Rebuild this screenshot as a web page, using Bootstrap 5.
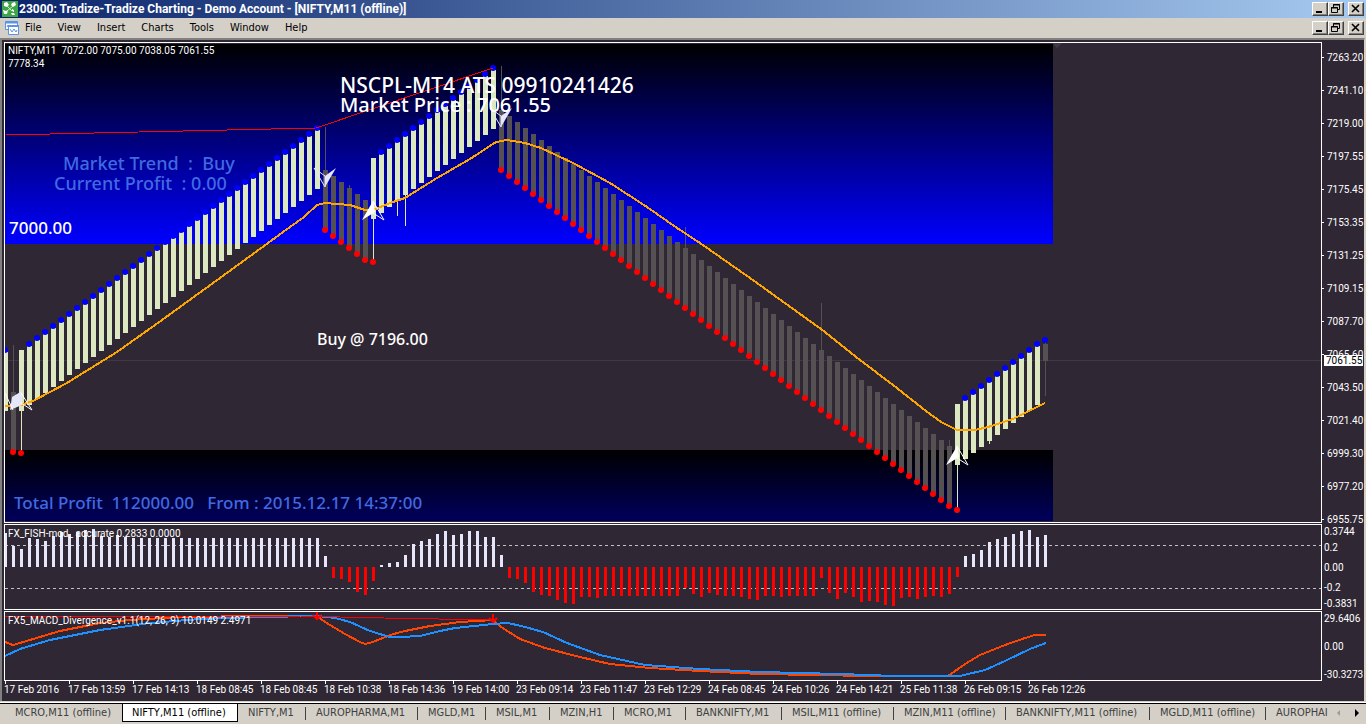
<!DOCTYPE html>
<html lang="en">
<head>
<meta charset="utf-8">
<meta name="viewport" content="width=device-width, initial-scale=1">
<title>Tradize Charting</title>
<link href="https://cdn.jsdelivr.net/npm/bootstrap@5.3.0/dist/css/bootstrap.min.css" rel="stylesheet">
<style>
:root{--face:#d4d0c8;--ink:#2f2733;--ui:"DejaVu Sans Condensed","Open Sans",sans-serif;--chart:Roboto,sans-serif;--hand:"Comic Sans MS","Noto Sans",sans-serif}
body{font:11px/14px Tahoma,var(--ui);background:var(--face);color:#000;overflow:hidden}
.titlebar{height:18px;background:linear-gradient(90deg,#0a246a,#a6caf0);color:#fff;padding-right:2px}
.titlebar h1{font:bold 12px/18px Tahoma,Roboto,sans-serif;white-space:nowrap}
.menubar{height:20px;padding-right:2px}
.menubar .nav-link{color:#000;font-size:11px;line-height:20px;padding:0;white-space:nowrap}
.menus{gap:16px}
.winbtn{width:16px;height:14px;padding:0;border:1px solid;border-color:#fff #404040 #404040 #fff;background:var(--face);box-shadow:inset -1px -1px #808080;display:flex;align-items:center;justify-content:center}
.winbtn svg{display:block}
.client{flex:1 1 0;background:var(--ink);border-left:2px solid #808080;border-top:2px solid #808080;border-right:1px solid var(--face);padding:2px 0 0 2px;color:#fff;margin-right:1px;min-height:0}
.plotrow{display:grid;grid-template-columns:minmax(0,1fr) 42px;grid-template-rows:minmax(0,1fr)}
.mainrow{flex:1 1 0;min-height:0}
.fishrow{height:86px;margin-top:1px;flex:none}
.macdrow{height:70px;margin-top:1px;flex:none}
.plot{border:1px solid #fff;position:relative;overflow:hidden}
.plot svg{display:block;width:100%;height:100%}
.scale{font:10px/33px Tahoma,var(--chart);position:relative}
.scale div{height:33px;display:flex;align-items:center}
.scale .pricetick::before{content:"";width:2px;height:1px;background:#fff;margin-right:3px}
.mainrow .scale{margin-top:-1px}
.scale .lastprice{position:absolute;left:2px;right:1px;top:314px;height:11px;background:#fff;color:#000;padding-left:2px;line-height:11px}
.subscale{padding:2px 0 0 2px}
.subscale div{height:auto;line-height:12px}
.fishrow .subscale div:nth-child(2){margin-bottom:4px}
.fishrow .subscale div:nth-child(4){margin-top:4px}
.times{height:20px;flex:none;font:10px/18px Tahoma,var(--chart)}
.times li{width:64px;flex:none;white-space:nowrap;position:relative}
.times li::before{content:"";position:absolute;left:1px;top:0;height:3px;border-left:1px solid #fff}
.tabs{height:21px;border-top:1px solid #000;box-shadow:0 -1px #fff;margin-top:2px;display:grid;grid-template-columns:122px 116px 68px 112px 68px 64px 64px 72px 96px 112px 112px 144px 116px minmax(0,1fr) 36px}
.tabs a{color:#404040;font-size:11px;line-height:18px;height:20px;text-decoration:none;white-space:nowrap;overflow:hidden;padding-left:10px;background:linear-gradient(#404040,#404040) right 3px/1px 13px no-repeat}
.tabs li{display:grid;min-width:0}
.tabs li:first-child a{padding-left:15px;background:none}
.tabs li:nth-child(14) a{background:none}
.tabs a.current{background:#fff;color:#000;border:1px solid #000;border-top:0;height:18px;padding-left:9px}
.tabs button{border:0;background:none;padding:0;width:18px;height:18px;line-height:16px}
.lbl{font:10px Tahoma,var(--chart);fill:#fff}
.note{font-family:var(--hand);font-weight:500;white-space:pre}
</style>
</head>
<body class="vh-100 d-flex flex-column">
<header class="titlebar d-flex align-items-center flex-shrink-0">
  <svg class="flex-shrink-0" width="19" height="18" viewBox="0 0 19 18"><rect x="2" y="1" width="16" height="16" fill="#3fa648"/><path d="M4 3l3-1 2 3-2 2-3-1zM12 3l3-1 1 3-3 2-2-2zM3 10l3 1 2-1-1 4H4zM12 9l2 1v2l-2-1zM11 13l3 0 1 2-3 0z" fill="#fff"/><path d="M7 6l5 5M13 6l-6 5" stroke="#c9f0c9"/></svg>
  <h1 class="m-0 flex-grow-1">23000: Tradize-Tradize Charting - Demo Account - [NIFTY,M11 (offline)]</h1>
  <div class="d-flex ctl"></div>
</header>
<nav class="menubar d-flex align-items-center flex-shrink-0">
  <svg class="flex-shrink-0" width="25" height="16" viewBox="0 0 25 16"><path d="M5.500 1.500h12v8h-12z" fill="#fff" stroke="#5b93e6"/><path d="M5 2.500h13" stroke="#5b93e6" stroke-width="2"/><path d="M7 7l1-2 1 2" fill="none" stroke="#5b93e6"/><path d="M8.500 5.500h10v9h-10z" fill="#fff" stroke="#5b93e6"/><path d="M8 6h11" stroke="#5b93e6" stroke-width="2"/><path d="M10 9l2 3 2-3 2 3 1-2" fill="none" stroke="#5b93e6"/></svg>
  <ul class="nav menus flex-grow-1 flex-nowrap">
    <li><a class="nav-link" href="#">File</a></li><li><a class="nav-link" href="#">View</a></li><li><a class="nav-link" href="#">Insert</a></li><li><a class="nav-link" href="#">Charts</a></li><li><a class="nav-link" href="#">Tools</a></li><li><a class="nav-link" href="#">Window</a></li><li><a class="nav-link" href="#">Help</a></li>
  </ul>
  <div class="d-flex ctl"></div>
</nav>
<main class="client d-flex flex-column">
  <div class="plotrow mainrow">
    <div class="plot"><svg id="price" role="img" aria-label="NIFTY price chart"></svg></div>
    <div class="scale" id="priceScale"></div>
  </div>
  <div class="plotrow fishrow">
    <div class="plot"><svg id="fish" role="img" aria-label="FX_FISH indicator"></svg></div>
    <div class="scale subscale d-flex flex-column justify-content-between"><div>0.3744</div><div>0.2</div><div>0.00</div><div>-0.2</div><div>-0.3831</div></div>
  </div>
  <div class="plotrow macdrow">
    <div class="plot"><svg id="macd" role="img" aria-label="MACD divergence"></svg></div>
    <div class="scale subscale d-flex flex-column justify-content-between"><div>29.6406</div><div>0.00</div><div>-30.3273</div></div>
  </div>
  <ul class="times list-unstyled d-flex m-0" id="times"></ul>
</main>
<footer class="flex-shrink-0">
  <ul class="tabs list-unstyled mb-0" id="tabs"></ul>
</footer>
<script src="https://cdn.jsdelivr.net/npm/bootstrap@5.3.0/dist/js/bootstrap.bundle.min.js"></script>
<script>
const glyph={Minimize:'<path d="M2 8h6v2H2z"/>',Restore:'<path d="M3.500 4V1.500h6v5H8M3 2h7M1.500 4.500h6v5h-6zM1 5h7" fill="none" stroke="#000"/>',Close:'<path d="M2 2l7 7M9 2l-7 7" stroke="#000" stroke-width="1.600"/>'};
document.querySelectorAll('.ctl').forEach(c=>{for(const n in glyph)c.insertAdjacentHTML('beforeend',`<button type="button" class="winbtn${n==='Close'?' ms-1':''}" aria-label="${n}"><svg width="12" height="12" viewBox="0 0 12 12">${glyph[n]}</svg></button>`)});

const rect=(x,y,w,h,f)=>`<rect x="${x}" y="${y}" width="${w}" height="${h}" fill="${f}"/>`;
const line=(p,c,w)=>`<polyline points="${p}" fill="none" stroke="${c}" stroke-width="${w}" shape-rendering="crispEdges"/>`;
const text=(x,y,s,f,t)=>`<text class="note" xml:space="preserve" x="${x}" y="${y}" font-size="${s}" fill="${f}">${t}</text>`;
const LIGHT='#dce8c0',GRAY='#555152';
// candle: index, body top, body bottom, colour, wick top, wick bottom
let bodies='',dots='';
const bar=(i,t,b,c,wt=t,wb=b)=>{const x=5+8*i;bodies+=rect(x,wt,1,wb-wt,c)+rect(x-2,t,5,b-t,c)};
const dot=(i,y,c)=>{dots+=`<circle cx="${5+8*i}" cy="${y}" r="3" fill="${c}"/>`};
const run=(a,z,top,len,step,c,off,dc,wicks={})=>{for(let i=a;i<=z;i++){const t=top+step*(i-a),w=wicks[i]||[];bar(i,t,t+len,c,w[0]||t,w[1]||t+len);dot(i,t+off,dc)}};
bar(0,352,411,LIGHT);dot(0,350,'#00f');
bar(1,392,452,GRAY,345);dot(1,452,'red');
bar(2,350,411,LIGHT,350,452);dot(2,453,'red');
run(3,39,346,59,-6,LIGHT,-2,'#00f');
run(40,45,170,59,6,GRAY,60,'red',{40:[127],43:[185]});
bar(46,158,219,LIGHT,158,262);dot(46,262,'red');
run(47,61,154,59,-6,LIGHT,-2,'#00f',{49:[0,216],50:[0,226]});
run(62,118,110,59,6,GRAY,60,'red',{62:[66],85:[227],102:[303],118:[440]});
bar(119,404,465,LIGHT,404,510);dot(119,510,'red');
run(120,129,400,59,-6,LIGHT,-2,'#00f',{123:[0,444]});
bar(130,344,361,GRAY,341,396);dot(130,340,'#00f');

const up=(x,y)=>`<path d="M${x} ${y-10}l2 11-13 8zM${x} ${y-10}l-1 12-10 7" fill="#fff"/><path d="M${x} ${y-10}l11 19-11-7z" fill="none" stroke="#fff"/>`;
const down=(x,y)=>`<path d="M${x} ${y+9}l0-11 11-8z" fill="#e6e6fa"/><path d="M${x} ${y+9}l-11-19 11 8z" fill="none" stroke="#e6e6fa"/>`;
const ma='5,406 21,405 33,401 50,392 67,383 83,373 117,352 162,320 231,270 290,227 304,217 317,205 325,203 350,205 365,210 373,210 390,203 405,198 437,178 470,159 496,142 507,140 525,143 541,148 573,163 610,183 647,207 677,228 700,243 750,278 821,329 860,360 893,385 926,411 941,422 957,430 975,430 988,427 1013,419 1045,403';
document.getElementById('price').innerHTML=`<defs><linearGradient id="g1" x2="0" y2="1"><stop stop-color="#000"/><stop offset="1" stop-color="#00f"/></linearGradient><linearGradient id="g2" x2="0" y2="1"><stop stop-color="#000"/><stop offset="1" stop-color="#00005c"/></linearGradient></defs><g transform="translate(-5 -43)">`
+rect(5,44,1048,200,'url(#g1)')+rect(5,450,1048,71,'url(#g2)')
+'<path d="M1052 43h10l-5 5z" fill="#403a48"/>'
+rect(5,360,2000,1,'#403844')
+text(63,170,18,'#4169e1','Market Trend  :  Buy')+text(54,190,18,'#4169e1','Current Profit  : 0.00')
+text(9,234,17,'#fff','7000.00')+text(317,345,16,'#fff','Buy @ 7196.00')
+text(14,509,17,'#4169e1','Total Profit  112000.00   From : 2015.12.17 14:37:00')
+bodies+dots+line(ma,'orange',2)+line('6,135 316,128 493,68','red',1)
+up(373,211)+up(957,456)+down(325,178)+down(501,118)
+'<path d="M12 397l10-6v14l-12 5z" fill="#e6e6fa"/><path d="M5 393l8 17M21 393l11 17-11-7" fill="none" stroke="#fff"/>'
+text(340,93,21,'#fff','NSCPL-MT4 ATS 09910241426')+text(340,112,20,'#fff','Market Price : 7061.55')
+'<text class="lbl" x="8" y="54">NIFTY,M11&#160; 7072.00 7075.00 7038.05 7061.55</text><text class="lbl" x="8" y="67">7778.34</text></g>';

const F=[533,546,549,538,539,541,536,532,534,532,530,529,536,537,535,537,...Array(24).fill(538),556,578,579,582,592,595,581,565,563,562,555,544,541,539,534,531,535,534,531,531,537,537,555,578,579,583,592,595,596,600,603,604,597,597,598,...Array(10).fill(596),588,594,597,593,595,596,596,597,599,600,596,596,597,596,596,596,596,578,593,599,593,597,602,601,602,605,606,598,597,599,597,596,597,594,577,556,554,550,542,539,537,534,531,530,537,535];
const dash=y=>`<path d="M5 ${y}.5H2000" stroke="#c0c0c0" stroke-dasharray="3 3"/>`;
document.getElementById('fish').innerHTML='<g transform="translate(-5 -525)">'+dash(545)+dash(588)+F.map((v,i)=>rect(4+8*i,Math.min(v,567),3,Math.abs(v-567),v<567?'#e6e6fa':'red')).join('')+'<text class="lbl" x="8" y="537">FX_FISH-mod_ accurate 0.2833 0.0000</text></g>';

const spark=(x,y)=>`<path d="M${x} ${y-5}v8M${x-4} ${y-1}l4 4 4-4" fill="none" stroke="red" stroke-width="2"/>`;
document.getElementById('macd').innerHTML='<g transform="translate(-5 -612)">'
+line('5,642 13,645 30,640 60,631 100,623 130,620 180,617 262,616 317,616 325,622 345,634 360,642 365,644 373,642 390,635 405,631 430,626 460,622 493,620 501,627 520,639 545,648 580,657 610,664 650,668 700,671 760,674 870,676 948,676 965,664 980,655 1005,645 1025,638 1035,635 1046,635','#ff4500',2)
+line('5,656 20,649 50,640 100,630 150,623 200,619 260,617 317,616 335,618 350,622 370,631 390,637 400,637 420,636 440,631 455,628 493,624 508,623 525,627 543,632 567,643 600,655 645,665 700,669 760,672 840,674 895,676 960,676 985,670 1005,661 1030,649 1046,643','#1e90ff',2)
+line('5,616 300,616 340,617 384,618 493,620','red',1)+spark(317,616)+spark(493,619)
+'<text class="lbl" x="8" y="624">FX5_MACD_Divergence_v1.1(12, 26, 9) 10.0149 2.4971</text></g>';

document.getElementById('priceScale').innerHTML='7263.20 7241.10 7219.00 7197.55 7175.45 7153.35 7131.25 7109.15 7087.70 7065.60 7043.50 7021.40 6999.30 6977.20 6955.75'.split(' ').map(v=>`<div class="pricetick">${v}</div>`).join('')+'<div class="lastprice">7061.55</div>';
document.getElementById('times').innerHTML='17 Feb 2016|17 Feb 13:59|17 Feb 14:13|18 Feb 08:45|18 Feb 08:45|18 Feb 10:38|18 Feb 14:36|19 Feb 14:00|23 Feb 09:14|23 Feb 11:47|23 Feb 12:29|24 Feb 08:45|24 Feb 10:26|24 Feb 14:21|25 Feb 11:38|26 Feb 09:15|26 Feb 12:26'.split('|').map(t=>`<li>${t}</li>`).join('');
document.getElementById('tabs').innerHTML='MCRO,M11 (offline)|NIFTY,M11 (offline)|NIFTY,M1|AUROPHARMA,M1|MGLD,M1|MSIL,M1|MZIN,H1|MCRO,M1|BANKNIFTY,M1|MSIL,M11 (offline)|MZIN,M11 (offline)|BANKNIFTY,M11 (offline)|MGLD,M11 (offline)|AUROPHAI'.split('|').map((t,i)=>`<li><a href="#"${i===1?' class="current" aria-current="page"':''}>${t}</a></li>`).join('')
+'<li class="d-flex"><button type="button" aria-label="Scroll left"><svg width="6" height="8" viewBox="0 0 6 8"><path d="M4 1v6L1 4z" fill="#999"/></svg></button><button type="button" aria-label="Scroll right"><svg width="6" height="8" viewBox="0 0 6 8"><path d="M1 0v8l4-4z"/></svg></button></li>';
</script>
</body>
</html>
